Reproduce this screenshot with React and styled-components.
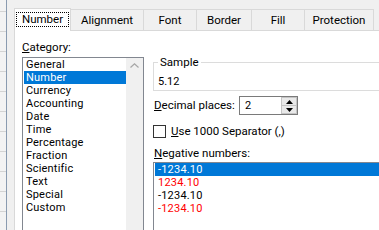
import styled, { createGlobalStyle } from "styled-components";

const Global = createGlobalStyle`
  body {
    margin: 0;
    font-family: Roboto, "Liberation Sans", sans-serif;
    font-size: 11px;
    color: #000;
  }
`;

const Screen = styled.div`
  display: flex;
  width: 379px;
  height: 230px;
  overflow: hidden;
`;

const SheetEdge = styled.div`
  width: 6px;
  flex: none;
  background: repeating-linear-gradient(
    to bottom,
    #f3f3f3 0 11px,
    #d4d4d4 11px 12px,
    #f3f3f3 12px 20px
  );
  border-right: 1px solid #8a9bb0;
`;

const Dialog = styled.div`
  flex: 1;
  min-width: 0;
  display: flex;
  flex-direction: column;
  background: #f0f0f0;
  padding: 8px 0 0 7px;
`;

const TabStrip = styled.div`
  display: flex;
  align-items: flex-end;
  height: 22px;
  position: relative;
  z-index: 1;
`;

const Tab = styled.div`
  flex: none;
  width: ${(p) => p.$w}px;
  height: ${(p) => (p.$active ? 23 : 21)}px;
  margin-left: ${(p) => (p.$first ? 0 : -1)}px;
  margin-bottom: ${(p) => (p.$active ? -1 : 0)}px;
  box-sizing: border-box;
  display: flex;
  align-items: center;
  justify-content: center;
  background: ${(p) => (p.$active ? "#fff" : "#f0f0f0")};
  border: 1px solid #d9d9d9;
  border-bottom: none;
  position: relative;
  z-index: ${(p) => (p.$active ? 2 : 1)};
  padding-bottom: ${(p) => (p.$active ? 1 : 0)}px;
  font-size: 11.5px;
`;

const Focus = styled.span`
  box-sizing: border-box;
  width: 53px;
  height: 15px;
  border: 1px dotted #000;
  display: flex;
  align-items: center;
  justify-content: center;
  line-height: 13px;
`;

const Page = styled.div`
  flex: 1;
  width: 420px;
  display: flex;
  background: #fff;
  border: 1px solid #d9d9d9;
  padding-left: 7px;
`;

const LeftCol = styled.div`
  flex: none;
  padding-top: 10px;
`;

const Label = styled.div`
  font-size: 11.5px;
  line-height: 13px;
  height: 13px;
  white-space: nowrap;
  margin-bottom: ${(p) => p.$mb || 0}px;
  margin-top: ${(p) => p.$mt || 0}px;
  padding-left: ${(p) => p.$pl || 0}px;
  width: ${(p) => (p.$w ? `${p.$w}px` : "auto")};
  flex: none;

  u {
    text-decoration: underline;
    text-underline-offset: 1px;
  }
`;

const ListBox = styled.div`
  box-sizing: border-box;
  width: ${(p) => p.$w}px;
  height: ${(p) => p.$h}px;
  border: 1px solid #828790;
  display: flex;
  background: #fff;
`;

const List = styled.div`
  flex: 1;
  padding-left: 1px;
`;

const Item = styled.div`
  height: 13px;
  line-height: 13px;
  padding-left: ${(p) => p.$pl || 2}px;
  white-space: nowrap;
  letter-spacing: 0.2px;
  color: ${(p) => (p.$selected ? "#fff" : p.$color || "#000")};
  background: ${(p) => (p.$selected ? "#0078d7" : "transparent")};
`;

const ScrollBar = styled.div`
  width: 17px;
  flex: none;
  background: #f0f0f0;
  display: flex;
  justify-content: center;
  padding-top: 5px;
  box-sizing: border-box;
`;

const RightCol = styled.div`
  flex: 1;
  margin-left: 9px;
  padding-top: 25px;
`;

const GroupBox = styled.fieldset`
  margin: 0;
  width: 300px;
  box-sizing: border-box;
  padding: 0 0 2px 4px;
  border: 1px solid #dcdcdc;
  min-width: 0;

  legend {
    padding: 0 2px;
    line-height: 13px;
    font-size: 11.5px;
  }
`;

const SampleValue = styled.div`
  line-height: 13px;
  margin-top: 6px;
`;

const Row = styled.div`
  display: flex;
  align-items: center;
  height: ${(p) => p.$h}px;
  margin-top: ${(p) => p.$mt}px;
`;

const SpinInput = styled.div`
  box-sizing: border-box;
  width: 59px;
  height: 19px;
  border: 1px solid #7a7a7a;
  display: flex;
  background: #fff;
`;

const SpinValue = styled.div`
  flex: 1;
  padding-left: 5px;
  line-height: 17px;
`;

const SpinButtons = styled.div`
  width: 16px;
  display: flex;
  flex-direction: column;
`;

const SpinButton = styled.div`
  flex: 1;
  background: #e9e9e9;
  border: 1px solid #c4c4c4;
  margin-top: ${(p) => (p.$down ? -1 : 0)}px;
  display: flex;
  align-items: center;
  justify-content: center;
`;

const CheckBox = styled.div`
  box-sizing: border-box;
  width: 13px;
  height: 13px;
  border: 1px solid #333;
  background: #fff;
  margin-right: 5px;
`;

const tabs = [
  { label: "Number", w: 57, active: true },
  { label: "Alignment", w: 74 },
  { label: "Font", w: 54 },
  { label: "Border", w: 56 },
  { label: "Fill", w: 54 },
  { label: "Protection", w: 70 },
];

const categories = [
  "General",
  "Number",
  "Currency",
  "Accounting",
  "Date",
  "Time",
  "Percentage",
  "Fraction",
  "Scientific",
  "Text",
  "Special",
  "Custom",
];

const negatives = [
  { text: "-1234.10", selected: true },
  { text: "1234.10", color: "#ff0000" },
  { text: "-1234.10" },
  { text: "-1234.10", color: "#ff0000" },
];

export default function App() {
  return (
    <Screen>
      <Global />
      <SheetEdge />
      <Dialog>
        <TabStrip>
          {tabs.map((t, i) => (
            <Tab key={t.label} $w={t.w} $active={t.active} $first={i === 0}>
              {t.active ? <Focus>{t.label}</Focus> : t.label}
            </Tab>
          ))}
        </TabStrip>
        <Page>
          <LeftCol>
            <Label $mb={3}>
              <u>C</u>ategory:
            </Label>
            <ListBox $w={122} $h={185}>
              <List>
                {categories.map((c) => (
                  <Item key={c} $selected={c === "Number"}>
                    {c}
                  </Item>
                ))}
              </List>
              <ScrollBar>
                <svg width="9" height="5" viewBox="0 0 9 5">
                  <path d="M0.5 4.5 L4.5 0.8 L8.5 4.5" fill="none" stroke="#a6a6a6" strokeWidth="1.2" />
                </svg>
              </ScrollBar>
            </ListBox>
          </LeftCol>
          <RightCol>
            <GroupBox>
              <legend>Sample</legend>
              <SampleValue>5.12</SampleValue>
            </GroupBox>
            <Row $h={19} $mt={5}>
              <Label $w={85} $pl={1}>
                <u>D</u>ecimal places:
              </Label>
              <SpinInput>
                <SpinValue>2</SpinValue>
                <SpinButtons>
                  <SpinButton>
                    <svg width="7" height="4" viewBox="0 0 7 4">
                      <path d="M0 4 L3.5 0 L7 4 Z" fill="#000" />
                    </svg>
                  </SpinButton>
                  <SpinButton $down>
                    <svg width="7" height="4" viewBox="0 0 7 4">
                      <path d="M0 0 L3.5 4 L7 0 Z" fill="#000" />
                    </svg>
                  </SpinButton>
                </SpinButtons>
              </SpinInput>
            </Row>
            <Row $h={13} $mt={10}>
              <CheckBox />
              <Label>
                <u>U</u>se 1000 Separator (,)
              </Label>
            </Row>
            <Label $mt={9} $mb={2} $pl={1}>
              <u>N</u>egative numbers:
            </Label>
            <ListBox $w={260} $h={110}>
              <List>
                {negatives.map((n, i) => (
                  <Item key={i} $pl={3} $selected={n.selected} $color={n.color}>
                    {n.text}
                  </Item>
                ))}
              </List>
            </ListBox>
          </RightCol>
        </Page>
      </Dialog>
    </Screen>
  );
}
